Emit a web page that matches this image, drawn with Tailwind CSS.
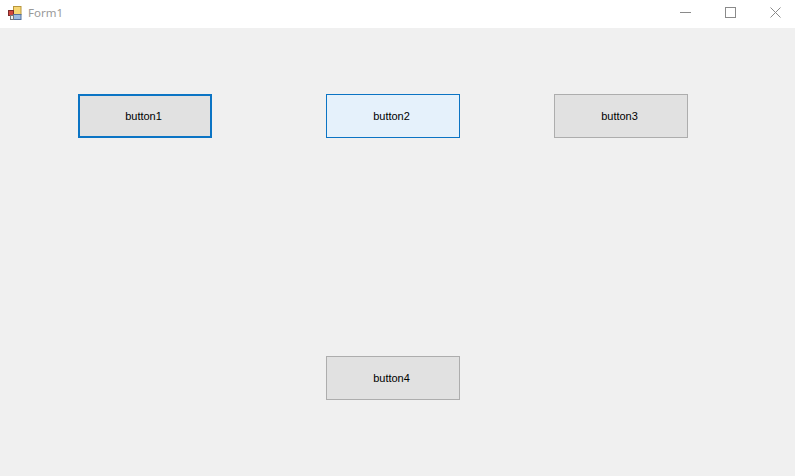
<!DOCTYPE html>
<html lang="en">
<head>
    <meta charset="UTF-8">
    <title>Form1</title>
    <script src="https://cdn.jsdelivr.net/npm/@tailwindcss/browser@4"></script>
</head>
<body class="h-[476px] w-[795px] overflow-hidden bg-[#f0f0f0] font-['Liberation_Sans',sans-serif]">
    <!-- Title bar -->
    <div class="flex h-[28px] items-center bg-white pb-[3px]">
        <svg class="ml-[8px] h-[14px] w-[14px]" viewBox="0 0 14 14">
            <rect x="5.5" y="0.5" width="7.5" height="8" fill="#f7d774" stroke="#b8963c"/>
            <rect x="0.5" y="4.5" width="5" height="5" fill="#d0453b" stroke="#7a2a2a"/>
            <rect x="5.5" y="8.5" width="7.5" height="5" fill="#9dbbe0" stroke="#54709a"/>
            <rect x="2.5" y="9.5" width="3" height="4" fill="#efefef" stroke="#777"/>
        </svg>
        <span class="ml-[6px] font-['Noto_Sans',sans-serif] text-[11.5px] text-[#999999]">Form1</span>
        <div class="ml-auto flex items-center gap-[34px] pr-[14px]">
            <div class="flex w-[11px] justify-center">
                <div class="h-px w-[11px] bg-[#8a8a8a]"></div>
            </div>
            <div class="flex w-[11px] justify-center">
                <div class="h-[11px] w-[11px] border border-[#8a8a8a]"></div>
            </div>
            <svg class="h-[11px] w-[11px]" viewBox="0 0 11 11" fill="none" stroke="#8a8a8a" stroke-width="1">
                <path d="M0.5 0.5L10.5 10.5M10.5 0.5L0.5 10.5"/>
            </svg>
        </div>
    </div>

    <!-- Form body -->
    <div class="pl-[78px] pt-[66px] text-[11px] text-black">
        <div class="flex">
            <button class="flex h-[44px] w-[134px] items-center justify-center border-2 border-[#0b74c4] bg-[#e1e1e1] pr-[3px]">button1</button>
            <button class="ml-[114px] flex h-[44px] w-[134px] items-center justify-center border border-[#0b74c4] bg-[#e5f1fb] pr-[3px]">button2</button>
            <button class="ml-[94px] flex h-[44px] w-[134px] items-center justify-center border border-[#adadad] bg-[#e1e1e1] pr-[3px]">button3</button>
        </div>
        <div class="mt-[218px] pl-[248px]">
            <button class="flex h-[44px] w-[134px] items-center justify-center border border-[#adadad] bg-[#e1e1e1] pr-[3px]">button4</button>
        </div>
    </div>
</body>
</html>
